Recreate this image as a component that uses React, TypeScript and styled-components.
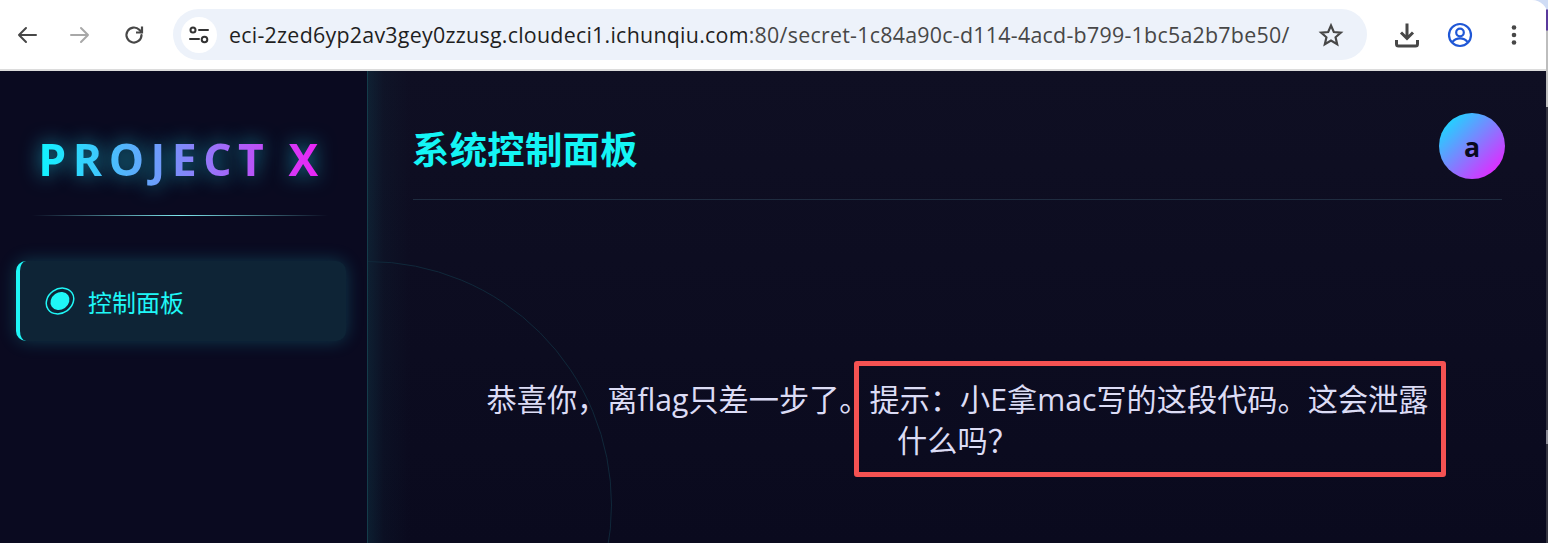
import React from "react";
import styled, { createGlobalStyle } from "styled-components";

const Global = createGlobalStyle`
  html, body { margin: 0; padding: 0; background: #0a0a1e; overflow: hidden; }
  #root { height: 543px; }
`;

const cjk = `"Open Sans", "Noto Sans CJK SC", sans-serif`;

const Page = styled.div`
  position: relative;
  width: 1548px;
  height: 543px;
  display: flex;
  flex-direction: column;
  overflow: hidden;
  font-family: ${cjk};
`;

const EdgeStrip = styled.div`
  position: absolute;
  right: 0;
  top: 0;
  width: 2px;
  height: 543px;
  background: linear-gradient(
    180deg,
    #cfdcf5 0,
    #cfdcf5 9px,
    #5a3a9c 10px,
    #5a3a9c 30px,
    #bdbdbd 31px,
    #bdbdbd 107px,
    #33333f 107px,
    #33333f 430px,
    #8a8a94 430px,
    #8a8a94 444px,
    #33333f 444px
  );
`;

const ToolbarEdge = styled.div`
  flex: none;
  background: #cfdcf5;
`;

const Toolbar = styled.header`
  height: 71px;
  box-sizing: border-box;
  display: flex;
  align-items: center;
  background: #fff;
  border-bottom: 2px solid #dcdcdc;
  border-top-right-radius: 16px;
`;

const NavButton = styled.span<{ $w?: number }>`
  width: ${(p) => p.$w ?? 54}px;
  height: 40px;
  display: flex;
  align-items: center;
  justify-content: center;
  flex: none;
`;

const Omnibox = styled.div`
  margin-left: 12px;
  width: 1194px;
  height: 51px;
  flex: none;
  border-radius: 26px;
  background: #edf2fa;
  display: flex;
  align-items: center;
  padding-left: 8px;
  box-sizing: border-box;
`;

const SiteChip = styled.span`
  width: 36px;
  height: 36px;
  border-radius: 50%;
  background: #fff;
  display: flex;
  align-items: center;
  justify-content: center;
  flex: none;
`;

const Url = styled.span`
  margin-left: 12px;
  width: 1085px;
  flex: none;
  font-family: "Open Sans", sans-serif;
  font-size: 21.4px;
  letter-spacing: 0.26px;
  color: #1f1f1f;
  white-space: nowrap;
`;

const UrlDim = styled.span`
  color: #474747;
`;

const StarSlot = styled.span`
  display: flex;
  margin-left: 4px;
`;

const Actions = styled.div`
  display: flex;
  align-items: center;
  margin-left: 13px;
`;

const Body = styled.div`
  flex: 1;
  display: flex;
  min-height: 0;
`;

const Sidebar = styled.aside`
  width: 368px;
  flex: none;
  box-sizing: border-box;
  background: #0a0a20;
  border-right: 1px solid #143c4a;
  padding: 0 21px 0 16px;
`;

const LogoWrap = styled.div`
  height: 145px;
  box-sizing: border-box;
  margin: 0 18px 0 16px;
  padding-left: 3px;
  display: flex;
  flex-direction: column;
  align-items: center;
  position: relative;
  &::after {
    content: "";
    position: absolute;
    left: 0;
    right: 0;
    bottom: 0;
    height: 1px;
    background: linear-gradient(90deg, transparent, #7fe8ee, transparent);
  }
`;

const LogoLayer = styled.div`
  position: relative;
  z-index: 0;
  margin-top: 57px;
`;

const Logo = styled.div`
  position: relative;
  font-size: 44.5px;
  line-height: 62px;
  font-weight: 700;
  letter-spacing: 6.5px;
  white-space: nowrap;
  background: linear-gradient(90deg, #0ff5ff, #f01ff5);
  -webkit-background-clip: text;
  background-clip: text;
  color: transparent;
  &::before {
    content: "PROJECT X";
    position: absolute;
    inset: 0;
    color: transparent;
    text-shadow: 0 0 20px rgba(31, 230, 255, 0.6);
    z-index: -1;
  }
`;

const MenuItem = styled.div`
  margin-top: 45px;
  height: 80px;
  box-sizing: border-box;
  border-left: 4px solid #1ff7f7;
  border-radius: 10px;
  background: #0e2436;
  box-shadow: 0 0 18px rgba(30, 230, 240, 0.22);
  display: flex;
  align-items: center;
  padding-left: 25px;
  gap: 13px;
  color: #1ff7f7;
  font-size: 24px;
`;

const Main = styled.main`
  flex: 1;
  min-width: 0;
  position: relative;
  overflow: hidden;
  background:
    linear-gradient(90deg, rgba(16, 54, 70, 0.45) 0, rgba(16, 50, 66, 0.14) 16px, rgba(16, 50, 66, 0) 42px),
    linear-gradient(180deg, #0f0f23 0, #0a0a1e 100%);
  padding: 0 46px 0 45px;
`;

const Ring = styled.div`
  position: absolute;
  left: -244px;
  top: 190px;
  width: 488px;
  height: 488px;
  box-sizing: border-box;
  border-radius: 50%;
  border: 1.5px solid #10283a;
`;

const Header = styled.div`
  position: relative;
  height: 129px;
  box-sizing: border-box;
  border-bottom: 1px solid #1f2c40;
  display: flex;
  align-items: flex-start;
  justify-content: space-between;
`;

const Title = styled.h1`
  margin: 50px 0 0 -1px;
  font-size: 37.33px;
  line-height: 58px;
  font-weight: 700;
  letter-spacing: 0.3px;
  color: #14f5f5;
`;

const Avatar = styled.div`
  width: 66px;
  height: 66px;
  margin: 42px -3px 0 0;
  border-radius: 50%;
  background: linear-gradient(135deg, #00f0ff, #ff0fff);
  display: flex;
  align-items: center;
  justify-content: center;
  font-size: 26.67px;
  font-weight: 700;
  color: #0a0a1e;
`;

const Message = styled.p`
  position: relative;
  max-width: 950px;
  margin: 179px auto 0;
  text-align: center;
  font-size: 30.2px;
  line-height: 41px;
  color: #dcdcf5;
`;

const Annotation = styled.div`
  position: absolute;
  left: 486px;
  top: 290px;
  width: 592px;
  height: 116px;
  box-sizing: border-box;
  border: 5px solid #f55252;
  border-radius: 3px;
`;

const stroke = { fill: "none", strokeLinecap: "round" as const, strokeLinejoin: "round" as const };

export default function App() {
  return (
    <Page>
      <Global />
      <ToolbarEdge>
        <Toolbar>
          <NavButton $w={53}>
            <svg width="24" height="24" viewBox="0 0 24 24" {...stroke} stroke="#474747" strokeWidth="2">
              <path d="M21 12H4M11 5l-7 7 7 7" />
            </svg>
          </NavButton>
          <NavButton>
            <svg width="24" height="24" viewBox="0 0 24 24" {...stroke} stroke="#a8a8a8" strokeWidth="2">
              <path d="M3 12h17M13 5l7 7-7 7" />
            </svg>
          </NavButton>
          <NavButton>
            <svg width="24" height="24" viewBox="0 0 24 24" {...stroke} stroke="#474747" strokeWidth="2.2">
              <path d="M19.5 12a7.5 7.5 0 1 1-2.2-5.3L19.5 9" />
              <path d="M20 3.5V9.5h-6" strokeLinecap="butt" strokeLinejoin="miter" />
            </svg>
          </NavButton>
          <Omnibox>
            <SiteChip>
              <svg width="22" height="22" viewBox="0 0 22 22" {...stroke} stroke="#333" strokeWidth="2">
                <circle cx="5" cy="6" r="2.5" />
                <path d="M11 6h9M2 15h9" />
                <circle cx="16.5" cy="15.5" r="2.8" />
              </svg>
            </SiteChip>
            <Url>
              eci-2zed6yp2av3gey0zzusg.cloudeci1.ichunqiu.com
              <UrlDim>:80/secret-1c84a90c-d114-4acd-b799-1bc5a2b7be50/</UrlDim>
            </Url>
            <StarSlot>
              <svg width="26" height="26" viewBox="0 0 24 24" fill="none" stroke="#474747" strokeWidth="2" strokeLinejoin="miter">
                <path d="M12 3.2l2.6 6 6.5.6-4.9 4.3 1.5 6.4L12 17.1l-5.7 3.4 1.5-6.4-4.9-4.3 6.5-.6z" />
              </svg>
            </StarSlot>
          </Omnibox>
          <Actions>
            <NavButton>
              <svg width="28" height="28" viewBox="0 0 28 28" fill="none" stroke="#474747" strokeWidth="3">
                <path d="M14 2.5V17M8 11.5l6 6 6-6" />
                <path d="M3.5 19v4a2 2 0 0 0 2 2h17a2 2 0 0 0 2-2v-4" />
              </svg>
            </NavButton>
            <NavButton $w={52}>
              <svg width="26" height="26" viewBox="0 0 26 26" fill="none" stroke="#1f57d6" strokeWidth="2.2">
                <circle cx="13" cy="13" r="11" />
                <circle cx="13" cy="10.5" r="3.8" />
                <path d="M5.5 20c2-2.6 4.6-3.6 7.5-3.6s5.5 1 7.5 3.6" />
              </svg>
            </NavButton>
            <NavButton $w={56}>
              <svg width="24" height="24" viewBox="0 0 24 24" fill="#474747">
                <circle cx="12" cy="4.5" r="2.3" />
                <circle cx="12" cy="12" r="2.3" />
                <circle cx="12" cy="19.5" r="2.3" />
              </svg>
            </NavButton>
          </Actions>
        </Toolbar>
      </ToolbarEdge>
      <Body>
        <Sidebar>
          <LogoWrap>
            <LogoLayer>
              <Logo>PROJECT X</Logo>
            </LogoLayer>
          </LogoWrap>
          <MenuItem>
            <svg width="30" height="30" viewBox="0 0 30 30">
              <g transform="rotate(-35 15 15)">
                <ellipse cx="15" cy="15" rx="14.5" ry="12" fill="none" stroke="#1ff7f7" strokeWidth="1.5" />
                <ellipse cx="15" cy="15" rx="10" ry="8.5" fill="#1ff7f7" />
              </g>
            </svg>
            控制面板
          </MenuItem>
        </Sidebar>
        <Main>
          <Ring />
          <Header>
            <Title>系统控制面板</Title>
            <Avatar>a</Avatar>
          </Header>
          <Message>
            恭喜你，离flag只差一步了。提示：小E拿mac写的这段代码。这会泄露什么吗？
          </Message>
          <Annotation />
        </Main>
      </Body>
      <EdgeStrip />
    </Page>
  );
}
